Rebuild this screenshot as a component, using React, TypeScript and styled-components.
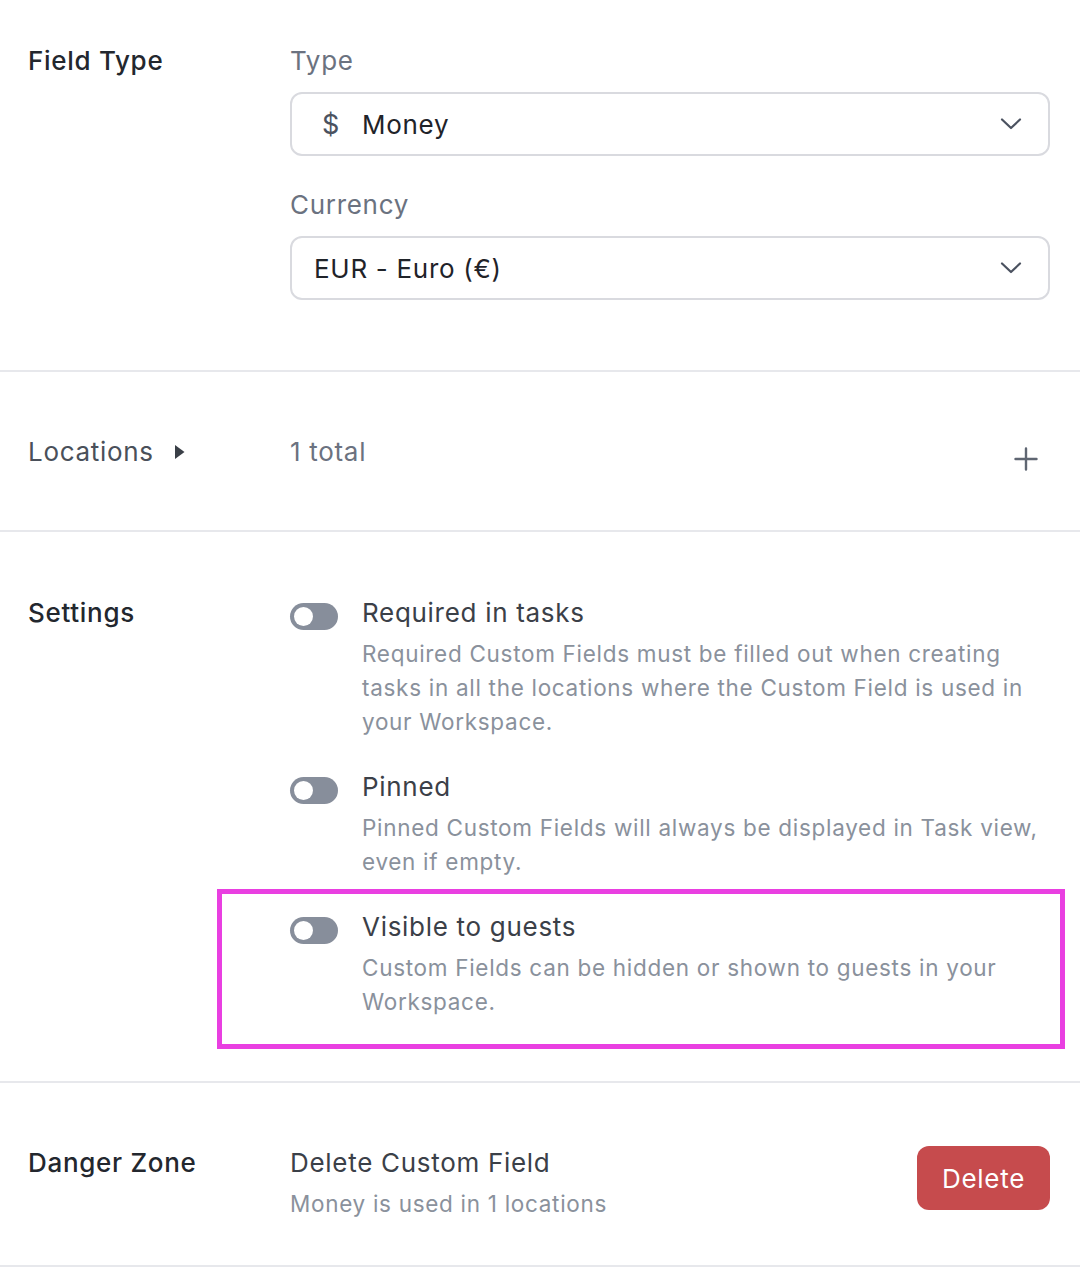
import React from "react";
import styled, { createGlobalStyle } from "styled-components";

const GlobalStyle = createGlobalStyle`
  html, body { margin: 0; padding: 0; background: #ffffff; }
  body {
    font-family: Inter, "Noto Sans", "Liberation Sans", sans-serif;
    -webkit-font-smoothing: antialiased;
    letter-spacing: 0.7px;
  }
  * { box-sizing: border-box; }
`;

const Page = styled.div`
  width: 1080px;
  background: #ffffff;
`;

const Section = styled.section<{ $pt: number; $pb: number; $align?: string }>`
  display: grid;
  grid-template-columns: 262px 1fr;
  align-items: ${(p) => p.$align || "start"};
  padding: ${(p) => p.$pt}px 30px ${(p) => p.$pb}px 28px;
  border-bottom: 2px solid #e7e8ec;
`;

const SectionLabel = styled.div<{ $muted?: boolean }>`
  display: flex;
  align-items: center;
  gap: 20px;
  font-size: 26px;
  line-height: 36px;
  color: ${(p) => (p.$muted ? "#4a505a" : "#23272e")};
  font-weight: ${(p) => (p.$muted ? 400 : 500)};
`;

const Column = styled.div`
  display: flex;
  flex-direction: column;
`;

const FieldLabel = styled.div`
  font-size: 26px;
  line-height: 36px;
  color: #6b7280;
  margin-bottom: 13px;
`;

const SelectBox = styled.div<{ $mb?: number }>`
  height: 64px;
  border: 2px solid #d9dadf;
  border-radius: 12px;
  display: flex;
  align-items: center;
  padding: 0 26px 0 22px;
  margin-bottom: ${(p) => p.$mb ?? 0}px;
  font-size: 26px;
  color: #1f2329;
`;

const SelectIcon = styled.span`
  width: 30px;
  margin-left: 8px;
  margin-right: 10px;
  color: #4b5260;
  font-size: 27px;
`;

const SelectText = styled.span`
  flex: 1;
`;

const LocationsRow = styled.div`
  height: 36px;
  display: flex;
  align-items: flex-start;
  justify-content: space-between;
`;

const MutedText = styled.div`
  font-size: 26px;
  line-height: 36px;
  color: #6b7280;
`;

const IconButton = styled.button`
  border: none;
  background: transparent;
  padding: 0;
  width: 24px;
  height: 24px;
  margin-top: 13px;
  margin-right: 12px;
  display: flex;
  align-items: center;
  justify-content: center;
  color: #5f6672;
  cursor: pointer;
`;

const SettingsList = styled.div`
  display: flex;
  flex-direction: column;
  gap: 30px;
`;

const SettingItem = styled.div<{ $highlight?: boolean }>`
  position: relative;
  display: flex;
  gap: 24px;
  align-items: flex-start;
  ${(p) =>
    p.$highlight &&
    `
    &::after {
      content: "";
      position: absolute;
      top: -20px;
      left: -73px;
      right: -15px;
      bottom: -30px;
      border: 5px solid #e93fe1;
      pointer-events: none;
    }
  `}
`;

const Toggle = styled.div`
  flex: none;
  width: 48px;
  height: 27px;
  margin-top: 8px;
  border-radius: 14px;
  background: #878e9b;
  position: relative;
  &::before {
    content: "";
    position: absolute;
    left: 4px;
    top: 4px;
    width: 19px;
    height: 19px;
    border-radius: 50%;
    background: #ffffff;
  }
`;

const SettingText = styled.div`
  display: flex;
  flex-direction: column;
  gap: 6px;
`;

const SettingTitle = styled.div`
  font-size: 26px;
  line-height: 36px;
  color: #3b4048;
`;

const SettingDesc = styled.div`
  font-size: 22.5px;
  line-height: 34px;
  color: #8a919c;
`;

const DangerRow = styled.div`
  display: flex;
  align-items: flex-start;
  justify-content: space-between;
`;

const DangerText = styled.div`
  display: flex;
  flex-direction: column;
  gap: 8px;
`;

const DangerTitle = styled.div`
  font-size: 26px;
  line-height: 36px;
  color: #3b4048;
`;

const DangerSub = styled.div`
  font-size: 22.5px;
  line-height: 30px;
  color: #8a919c;
`;

const DeleteButton = styled.button`
  width: 133px;
  height: 64px;
  margin-top: 1px;
  border: none;
  border-radius: 12px;
  background: #c64b4d;
  color: #ffffff;
  font-family: inherit;
  letter-spacing: 0.7px;
  font-size: 26px;
  cursor: pointer;
`;

const Chevron = () => (
  <svg width="22" height="14" viewBox="0 0 22 14" fill="none">
    <path d="M2 2.5 L11 11 L20 2.5" stroke="#4b5260" strokeWidth="2.2" strokeLinecap="round" strokeLinejoin="round" />
  </svg>
);

const Caret = () => (
  <svg width="11" height="16" viewBox="0 0 11 16">
    <path d="M1 1 L10.5 8 L1 15 Z" fill="#3a3f47" />
  </svg>
);

const Plus = () => (
  <svg width="24" height="24" viewBox="0 0 24 24" fill="none">
    <path d="M12 1.5 V22.5 M1.5 12 H22.5" stroke="#5f6672" strokeWidth="2.4" strokeLinecap="round" />
  </svg>
);

const settings = [
  {
    title: "Required in tasks",
    desc: "Required Custom Fields must be filled out when creating tasks in all the locations where the Custom Field is used in your Workspace.",
  },
  {
    title: "Pinned",
    desc: "Pinned Custom Fields will always be displayed in Task view, even if empty.",
  },
  {
    title: "Visible to guests",
    desc: "Custom Fields can be hidden or shown to guests in your Workspace.",
    highlight: true,
  },
];

export default function App() {
  return (
    <Page>
      <GlobalStyle />
      <Section $pt={43} $pb={70}>
        <SectionLabel>Field Type</SectionLabel>
        <Column>
          <FieldLabel>Type</FieldLabel>
          <SelectBox $mb={31}>
            <SelectIcon>$</SelectIcon>
            <SelectText>Money</SelectText>
            <Chevron />
          </SelectBox>
          <FieldLabel>Currency</FieldLabel>
          <SelectBox>
            <SelectText>EUR - Euro (€)</SelectText>
            <Chevron />
          </SelectBox>
        </Column>
      </Section>

      <Section $pt={62} $pb={60} $align="center">
        <SectionLabel $muted>
          Locations <Caret />
        </SectionLabel>
        <LocationsRow>
          <MutedText>1 total</MutedText>
          <IconButton aria-label="Add location">
            <Plus />
          </IconButton>
        </LocationsRow>
      </Section>

      <Section $pt={63} $pb={62}>
        <SectionLabel>Settings</SectionLabel>
        <SettingsList>
          {settings.map((s) => (
            <SettingItem key={s.title} $highlight={s.highlight}>
              <Toggle />
              <SettingText>
                <SettingTitle>{s.title}</SettingTitle>
                <SettingDesc>{s.desc}</SettingDesc>
              </SettingText>
            </SettingItem>
          ))}
        </SettingsList>
      </Section>

      <Section $pt={62} $pb={46}>
        <SectionLabel>Danger Zone</SectionLabel>
        <DangerRow>
          <DangerText>
            <DangerTitle>Delete Custom Field</DangerTitle>
            <DangerSub>Money is used in 1 locations</DangerSub>
          </DangerText>
          <DeleteButton>Delete</DeleteButton>
        </DangerRow>
      </Section>
    </Page>
  );
}
